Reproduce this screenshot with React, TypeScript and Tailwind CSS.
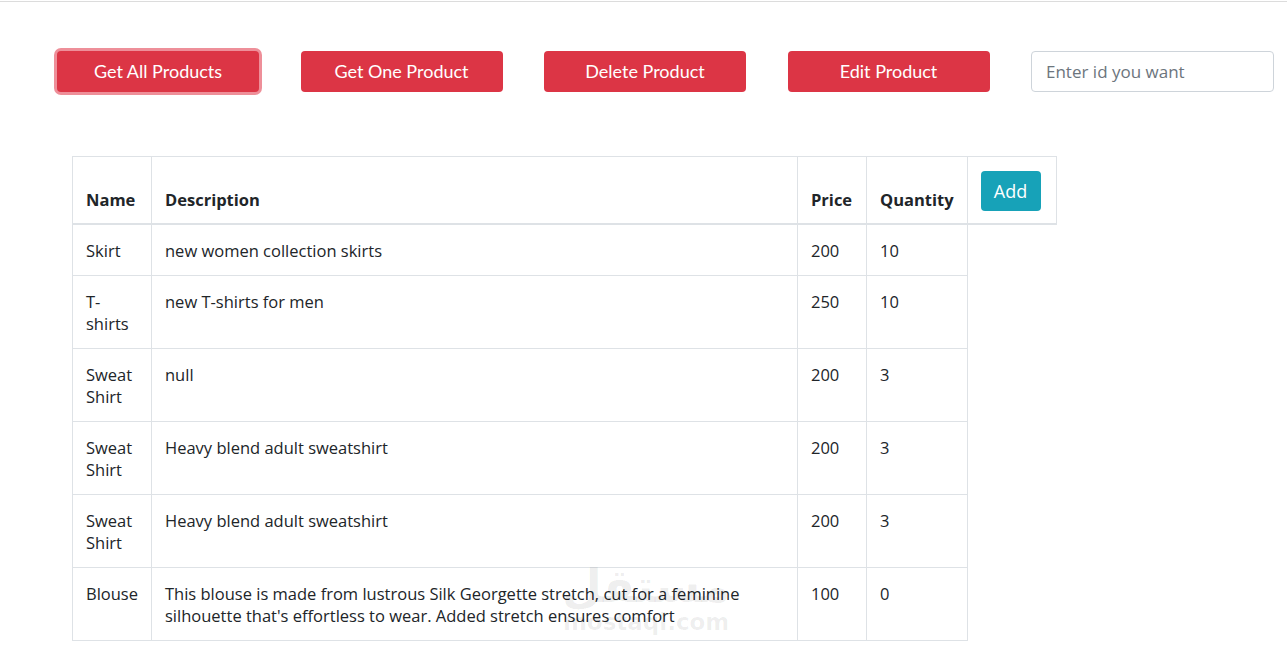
import React from 'react';

const products = [
    { name: 'Skirt', description: 'new women collection skirts', price: 200, quantity: 10 },
    { name: 'T-shirts', description: 'new T-shirts for men', price: 250, quantity: 10 },
    { name: 'Sweat Shirt', description: 'null', price: 200, quantity: 3 },
    { name: 'Sweat Shirt', description: 'Heavy blend adult sweatshirt', price: 200, quantity: 3 },
    { name: 'Sweat Shirt', description: 'Heavy blend adult sweatshirt', price: 200, quantity: 3 },
    {
        name: 'Blouse',
        description:
            "This blouse is made from lustrous Silk Georgette stretch, cut for a feminine silhouette that's effortless to wear. Added stretch ensures comfort",
        price: 100,
        quantity: 0,
    },
];

const actions = ['Get All Products', 'Get One Product', 'Delete Product', 'Edit Product'];

const App: React.FC = () => {
    return (
        <div className="relative min-h-[651px] bg-white text-[#212529] font-['Open_Sans',sans-serif]">
            <div className="h-px mt-px bg-[#dcdcdc]" />

            <div className="flex items-center gap-[41.5px] pl-[57px] pt-[49px]">
                {actions.map((label, idx) => (
                    <button
                        key={label}
                        className={
                            'w-[202px] h-[41px] rounded-[4px] bg-[#dc3545] text-white text-[18px] font-["Lato",sans-serif] ' +
                            (idx === 0 ? 'ring-[3px] ring-[#ee8f99]' : '')
                        }
                    >
                        {label}
                    </button>
                ))}
                <input
                    placeholder="Enter id you want"
                    className="w-[243px] h-[41px] rounded-[4px] border border-[#ced4da] px-[14px] text-[17px] placeholder-[#6c757d] outline-none"
                />
            </div>

            <div className="pl-[72px] pt-[64px]">
                <table className="table-fixed border-collapse text-[16.5px] leading-[22px]">
                    <colgroup>
                        <col className="w-[79px]" />
                        <col className="w-[646px]" />
                        <col className="w-[69px]" />
                        <col className="w-[98px]" />
                        <col className="w-[89px]" />
                    </colgroup>
                    <thead>
                        <tr className="align-bottom">
                            <th className="border border-[#dee2e6] border-b-2 px-[13px] pt-[14px] pb-[12px] text-left font-bold">Name</th>
                            <th className="border border-[#dee2e6] border-b-2 px-[13px] pt-[14px] pb-[12px] text-left font-bold">Description</th>
                            <th className="border border-[#dee2e6] border-b-2 px-[13px] pt-[14px] pb-[12px] text-left font-bold">Price</th>
                            <th className="border border-[#dee2e6] border-b-2 px-[13px] pt-[14px] pb-[12px] text-left font-bold">Quantity</th>
                            <th className="border border-[#dee2e6] border-b-2 px-[13px] pt-[14px] pb-[12px] text-left font-normal">
                                <button className="w-[60px] h-[40px] rounded-[4px] bg-[#17a2b8] text-white text-[18px]">
                                    Add
                                </button>
                            </th>
                        </tr>
                    </thead>
                    <tbody>
                        {products.map((p, idx) => (
                            <tr key={idx} className="align-top">
                                <td className="border border-[#dee2e6] px-[13px] pt-[15px] pb-[13px]">{p.name}</td>
                                <td className="border border-[#dee2e6] px-[13px] pt-[15px] pb-[13px]">{p.description}</td>
                                <td className="border border-[#dee2e6] px-[13px] pt-[15px] pb-[13px]">{p.price}</td>
                                <td className="border border-[#dee2e6] px-[13px] pt-[15px] pb-[13px]">{p.quantity}</td>
                            </tr>
                        ))}
                    </tbody>
                </table>
            </div>

            {/* watermark */}
            <div className="pointer-events-none absolute left-[562px] top-[562px] flex flex-col items-center text-[#000000]/[0.07] font-['DejaVu_Sans',sans-serif]">
                <span className="text-[46px] leading-[46px] font-bold">مستقل</span>
                <span className="text-[23px] leading-[26px] font-bold">mostaql.com</span>
            </div>
        </div>
    );
};

export default App;
